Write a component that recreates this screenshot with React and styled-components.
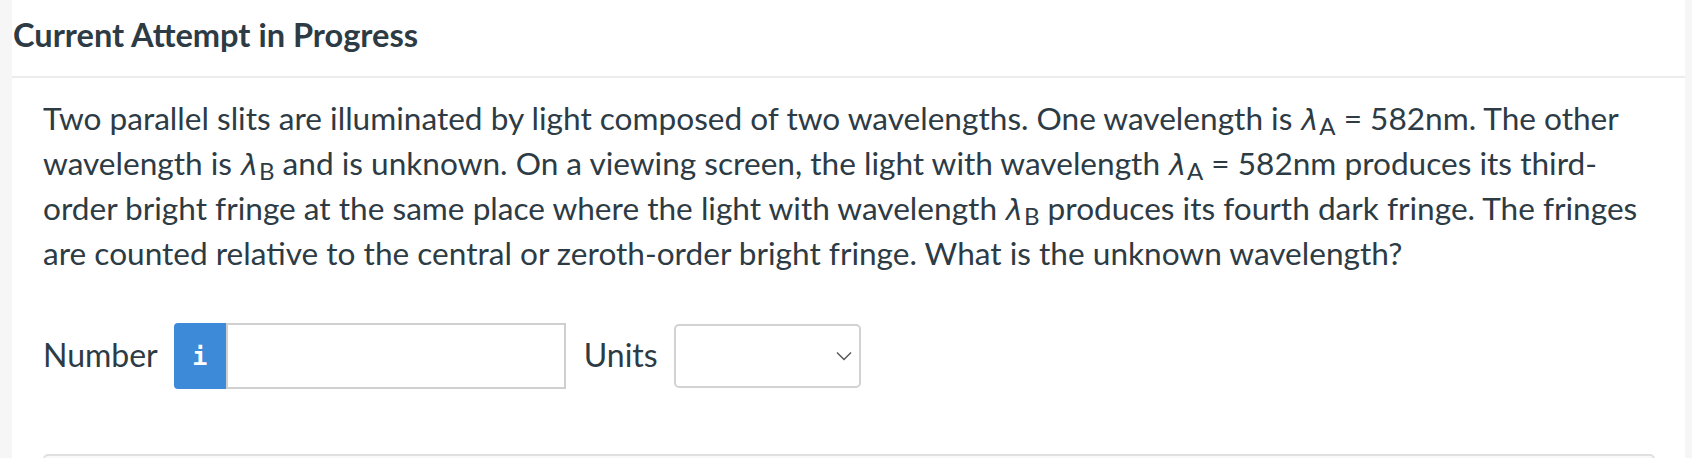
import React from 'react'
import styled, { createGlobalStyle } from 'styled-components'

const GlobalStyle = createGlobalStyle`
  html, body {
    margin: 0;
    padding: 0;
    background: #f6f6f6;
    font-family: Lato, "Open Sans", sans-serif;
    color: #2d3b45;
  }
`

const Page = styled.div`
  margin: 0 7px 0 12px;
  background: #ffffff;
  height: 458px;
  overflow: hidden;
`

const Header = styled.div`
  height: 76px;
  border-bottom: 2px solid #ececec;
  display: flex;
  align-items: center;
  padding-left: 1px;
`

const Title = styled.h2`
  margin: 0;
  padding-bottom: 8px;
  font-size: 32.6px;
  font-weight: 700;
  color: #2d3b45;
`

const Content = styled.div`
  padding: 19px 28px 0 31px;
`

const Question = styled.p`
  margin: 0;
  font-size: 31.6px;
  line-height: 42px;
  color: #2d3b45;
`

const Lambda = styled.span`
  font-family: "DejaVu Sans", sans-serif;
  font-style: italic;
  font-size: 0.9em;
  margin: 0 1px 0 1px;
`

const Sub = styled.sub`
  font-size: 0.76em;
  vertical-align: -0.22em;
  line-height: 0;
`

const AnswerRow = styled.div`
  display: flex;
  align-items: center;
  margin-top: 49px;
  height: 66px;
`

const Label = styled.span`
  font-size: 32px;
  margin-right: 16px;
  padding-bottom: 4px;
`

const InputGroup = styled.div`
  display: flex;
  height: 66px;
  margin-right: 18px;
`

const InfoButton = styled.button`
  width: 52px;
  height: 66px;
  border: none;
  border-radius: 4px 0 0 4px;
  background: #3d8ad9;
  color: #fff;
  display: flex;
  align-items: center;
  justify-content: center;
  font-family: "DejaVu Sans Mono", monospace;
  font-weight: 700;
  font-size: 25px;
  padding: 0;
`

const TextInput = styled.input`
  width: 340px;
  height: 66px;
  box-sizing: border-box;
  border: 2px solid #cfcfcf;
  border-radius: 0;
  outline: none;
`

const SelectBox = styled.div`
  width: 187px;
  height: 64px;
  box-sizing: border-box;
  border: 2px solid #d2d2d2;
  border-radius: 5px;
  display: flex;
  align-items: center;
  justify-content: flex-end;
  padding-right: 7px;
`

const Panel = styled.div`
  margin-top: 65px;
  height: 40px;
  margin-right: 2px;
  border: 2px solid #e0e0e0;
  border-radius: 5px 5px 0 0;
  background: #f9f9f9;
`

const L = ({ s }) => (
  <>
    <Lambda>λ</Lambda>
    <Sub>{s}</Sub>
  </>
)

export default function App() {
  return (
    <>
      <GlobalStyle />
      <Page>
        <Header>
          <Title>Current Attempt in Progress</Title>
        </Header>
        <Content>
          <Question>
            Two parallel slits are illuminated by light composed of two wavelengths. One wavelength is <L s="A" /> = 582nm. The other
            wavelength is <L s="B" /> and is unknown. On a viewing screen, the light with wavelength <L s="A" /> = 582nm produces its third-order
            bright fringe at the same place where the light with wavelength <L s="B" /> produces its fourth dark fringe. The fringes are counted
            relative to the central or zeroth-order bright fringe. What is the unknown wavelength?
          </Question>
          <AnswerRow>
            <Label>Number</Label>
            <InputGroup>
              <InfoButton>i</InfoButton>
              <TextInput type="text" />
            </InputGroup>
            <Label>Units</Label>
            <SelectBox>
              <svg width="16" height="10" viewBox="0 0 16 10">
                <path d="M1 1.5 L8 8.5 L15 1.5" fill="none" stroke="#555" strokeWidth="1.4" />
              </svg>
            </SelectBox>
          </AnswerRow>
          <Panel />
        </Content>
      </Page>
    </>
  )
}
